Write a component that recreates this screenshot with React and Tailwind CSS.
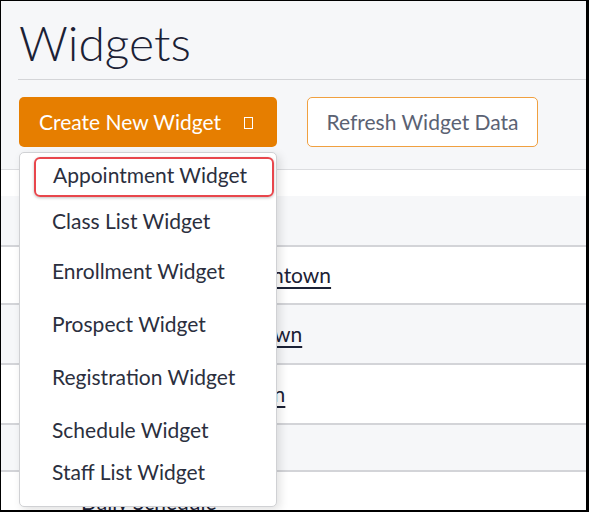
import { useState } from "react";

const widgetTypes = [
  { label: "Appointment Widget", h: "h-[41px]", active: true },
  { label: "Class List Widget", h: "h-[48px]" },
  { label: "Enrollment Widget", h: "h-[52px]" },
  { label: "Prospect Widget", h: "h-[53px]" },
  { label: "Registration Widget", h: "h-[54px]" },
  { label: "Schedule Widget", h: "h-[52px]" },
  { label: "Staff List Widget", h: "h-[31px]" },
];

const rows = [
  { name: "Downtown", bg: "bg-white", h: "h-[58px]", pl: "pl-[227px]" },
  { name: "Uptown", bg: "bg-[#f6f7f9]", h: "h-[60px]", pl: "pl-[227px]" },
  { name: "Mason", bg: "bg-white", h: "h-[60px]", pl: "pl-[222px]" },
  { name: "", bg: "bg-[#f6f7f9]", h: "h-[47px]", pl: "" },
  { name: "Daily Schedule", bg: "bg-white", h: "h-[59px]", first: true },
];

function App() {
  const [open] = useState(true);

  return (
    <div className="h-[512px] w-[589px] overflow-hidden bg-white font-['Lato','Liberation_Sans',sans-serif]">
      <div className="relative h-full w-full overflow-hidden border-t border-l border-r-[3px] border-b-2 border-black bg-[#f6f7f9]">
        <div className="pl-[17px]">
          <h1 className="pt-[14px] pl-[1px] text-[48px] leading-[56px] font-light text-[#1b2135]">Widgets</h1>
          <div className="mt-[8px] h-px bg-[#d4d5d8]" />
          <div className="mt-[17px] flex gap-[30px] pl-[1px]">
            <button className="flex h-[50px] w-[258px] items-center rounded-[5px] bg-[#e67e00] pl-[20px] text-[21px] text-white">
              <span>Create New Widget</span>
              <span className="ml-[23px] mt-[2px] inline-block h-[12px] w-[9px] border border-white" />
            </button>
            <button className="h-[50px] w-[231px] rounded-[5px] border border-[#f0a040] bg-white text-[21px] text-[#5b6273]">
              Refresh Widget Data
            </button>
          </div>
        </div>

        <div className="mt-[22px] border-t border-[#dcdde0] bg-white">
          <div className="h-[26px] bg-white" />
          <div className="h-[51px] border-b-2 border-[#d3d4d8] bg-[#f6f7f9]" />
          {rows.map((row, i) => (
            <div
              key={i}
              className={`flex items-center border-b-2 border-[#d3d4d8] text-[21px] text-[#1b2135] ${row.bg} ${row.h}`}
            >
              {row.first ? (
                <span className="pl-[80px] pt-[2px]">{row.name}</span>
              ) : (
                row.name && <span className={`${row.pl} underline underline-offset-4`}>{row.name}</span>
              )}
            </div>
          ))}
        </div>

        {open && (
          <div className="absolute top-[151px] left-[18px] w-[258px] rounded-[5px] border border-[#d0d1d4] bg-white pt-[3px] pb-[19px] shadow-[3px_3px_10px_rgba(0,0,0,0.12)]">
            {widgetTypes.map((item) => (
              <div key={item.label} className={`flex items-center ${item.h}`}>
                {item.active ? (
                  <div className="ml-[14px] flex h-[40px] w-[240px] items-center rounded-[6px] border-2 border-[#e8464c] pb-[4px] pl-[17px] text-[21px] text-[#2b2f3e] shadow-[0_1px_3px_rgba(0,0,0,0.25)]">
                    {item.label}
                  </div>
                ) : (
                  <span className="pl-[32px] text-[21px] text-[#2b2f3e]">{item.label}</span>
                )}
              </div>
            ))}
          </div>
        )}
      </div>
    </div>
  );
}

export default App;
